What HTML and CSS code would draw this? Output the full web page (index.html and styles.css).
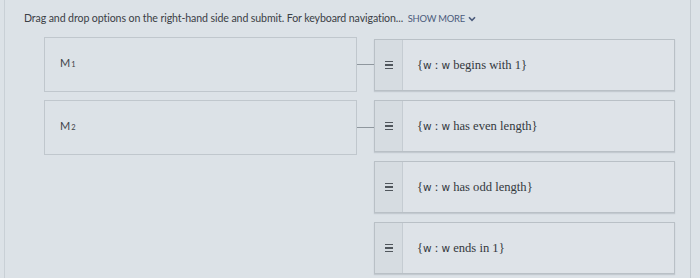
FILE: index.html
```html
<!DOCTYPE html>
<html lang="en">
<head>
    <meta charset="UTF-8">
    <meta name="viewport" content="width=device-width, initial-scale=1.0">
    <title>Drag and drop</title>
    <link rel="stylesheet" href="styles.css">
</head>
<body>
    <div class="frame">
        <p class="intro">
            Drag and drop options on the right-hand side and submit. For keyboard navigation...
            <span class="more">SHOW MORE <svg width="8" height="6" viewBox="0 0 8 6"><path d="M1 1.2 L4 4.3 L7 1.2" fill="none" stroke="#4b5b7c" stroke-width="1.6"/></svg></span>
        </p>

        <div class="board">
            <!-- targets on the left -->
            <div class="targets">
                <div class="target">
                    <div class="slot">M<sub>1</sub></div>
                    <div class="link"></div>
                </div>
                <div class="target">
                    <div class="slot">M<sub>2</sub></div>
                    <div class="link"></div>
                </div>
            </div>

            <!-- draggable options -->
            <div class="options">
                <div class="option">
                    <span class="handle"><i></i><i></i><i></i></span>
                    <span class="label">{<b>w</b> : <b>w</b> begins with 1}</span>
                </div>
                <div class="option">
                    <span class="handle"><i></i><i></i><i></i></span>
                    <span class="label">{<b>w</b> : <b>w</b> has even length}</span>
                </div>
                <div class="option">
                    <span class="handle"><i></i><i></i><i></i></span>
                    <span class="label">{<b>w</b> : <b>w</b> has odd length}</span>
                </div>
                <div class="option">
                    <span class="handle"><i></i><i></i><i></i></span>
                    <span class="label">{<b>w</b> : <b>w</b> ends in 1}</span>
                </div>
            </div>
        </div>
    </div>
</body>
</html>
```

FILE: styles.css
```css
* {
    box-sizing: border-box;
}

body, html {
    margin: 0;
    padding: 0;
    height: 100%;
    background-color: #dce2e7;
}

/* thin page edges on both sides */
.frame {
    margin-left: 4px;
    width: 687px;
    height: 100%;
    border-left: 1px solid #c9d0d6;
    border-right: 1px solid #c3cad0;
    font-family: 'Lato', sans-serif;
    color: #3b4045;
}

.intro {
    margin: 0;
    padding: 11px 0 0 19px;
    font-size: 10.6px;
    line-height: 14px;
    letter-spacing: -0.1px;
}

.more {
    margin-left: 2px;
    color: #4b5b7c;
    font-size: 9.4px;
    letter-spacing: -0.2px;
}

.more svg {
    margin-left: 1px;
    vertical-align: 0;
}

.board {
    display: flex;
    padding: 11px 0 0 39px;
}

.targets {
    display: flex;
    flex-direction: column;
    gap: 8px;
}

.target {
    display: flex;
    align-items: center;
}

.slot {
    width: 313px;
    height: 55px;
    border: 1px solid #c0c7cd;
    background: #dce2e7;
    padding: 0 0 4px 15px;
    display: flex;
    align-items: center;
    font-size: 11px;
    color: #3d4247;
}

.slot sub {
    font-size: 7.5px;
    position: relative;
    top: 2px;
    margin-left: 1px;
}

.link {
    width: 17px;
    height: 1px;
    background: #8f979e;
}

.options {
    display: flex;
    flex-direction: column;
    gap: 9px;
    padding-top: 2px;
}

.option {
    width: 301px;
    height: 52px;
    display: flex;
    border: 1px solid #b9c0c6;
    background: #dee3e8;
    box-shadow: 0 1px 1px rgba(120, 130, 140, 0.25);
}

.handle {
    width: 28px;
    display: flex;
    flex-direction: column;
    align-items: center;
    justify-content: center;
    gap: 2px;
    background: #d6dce1;
    border-right: 1px solid #c5ccd2;
}

.handle i {
    display: block;
    width: 8px;
    height: 1.5px;
    background: #50565c;
}

.label {
    display: flex;
    align-items: center;
    padding-left: 14px;
    font-family: 'Liberation Serif', serif;
    font-size: 12.6px;
    color: #34393e;
    white-space: pre;
}

.label b {
    font-family: 'DejaVu Sans', sans-serif;
    font-weight: normal;
    font-size: 10.5px;
}
```
